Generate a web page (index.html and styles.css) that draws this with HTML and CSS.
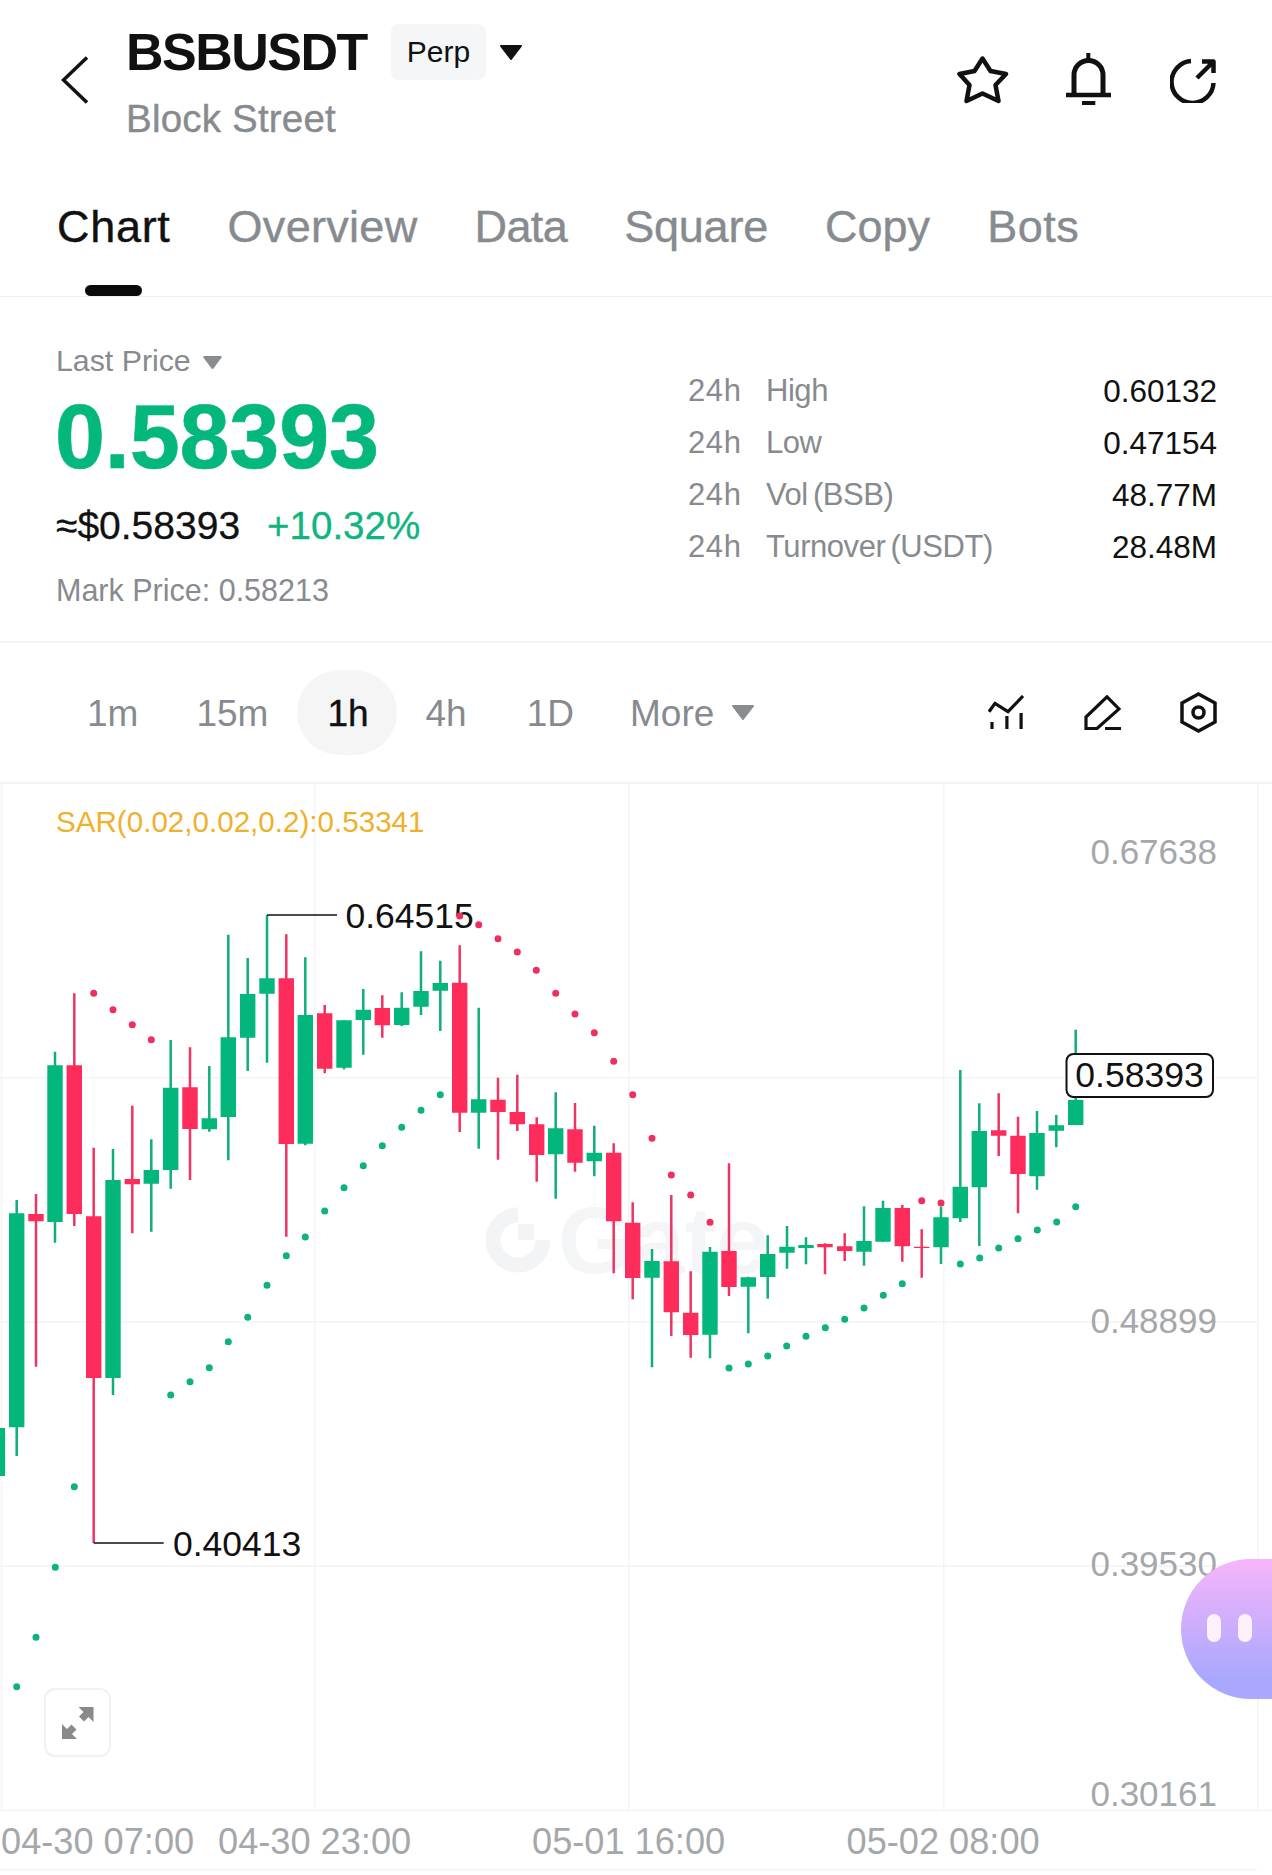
FILE: index.html
```html
<!DOCTYPE html>
<html lang="en">
<head>
<meta charset="utf-8">
<title>BSBUSDT Perp</title>
<link rel="stylesheet" href="styles.css">
</head>
<body>
<main class="app">
  <header class="top">
    <svg class="back" viewBox="0 0 28 48"><path d="M26 1.5 2.5 24 26 46.5"/></svg>
    <div class="pair">
      <div class="pair-row">
        <h1 class="symbol">BSBUSDT</h1>
        <span class="badge">Perp</span>
        <svg class="caret caret-dark" viewBox="0 0 22 15"><path d="M1 1h20L11 14z"/></svg>
      </div>
      <div class="pair-name">Block Street</div>
    </div>
    <div class="top-icons">
      <svg class="ic-star" viewBox="0 0 52 50"><path d="M25.500 3.500 33.500 16 49 19 38.500 30 41.500 46 25.500 38.500 9.500 46 12.500 30 2.500 19 17.500 16z"/></svg>
      <svg class="ic-bell" viewBox="0 0 45 52"><path d="M8 41V22a14.500 14.500 0 0 1 29 0V41"/><path class="solid" d="M20.300 0h4v7h-4zM0 39.700h45v4.600H0zM16 48h13.300v4.300H16z"/></svg>
      <svg class="ic-share" viewBox="0 0 46 45"><path d="M21 3A21 21 0 1 0 43.500 25"/><path d="M27 20 43 4M32 3.500H43.500V15"/></svg>
    </div>
  </header>

  <nav class="tabs">
    <a class="tab tab-on">Chart</a>
    <a class="tab">Overview</a>
    <a class="tab">Data</a>
    <a class="tab">Square</a>
    <a class="tab">Copy</a>
    <a class="tab">Bots</a>
  </nav>

  <section class="ticker">
    <div class="quote">
      <div class="quote-label">Last Price <svg class="caret caret-grey" viewBox="0 0 20 14"><path d="M1 1h18L10 13z"/></svg></div>
      <div class="quote-price">0.58393</div>
      <div class="quote-sub"><span>≈$0.58393</span><span class="up">+10.32%</span></div>
      <div class="quote-mark">Mark Price: 0.58213</div>
    </div>
    <dl class="stats">
      <dt>24h</dt><dd class="stat-name">High</dd><dd class="stat-val">0.60132</dd>
      <dt>24h</dt><dd class="stat-name">Low</dd><dd class="stat-val">0.47154</dd>
      <dt>24h</dt><dd class="stat-name">Vol (BSB)</dd><dd class="stat-val">48.77M</dd>
      <dt>24h</dt><dd class="stat-name">Turnover (USDT)</dd><dd class="stat-val">28.48M</dd>
    </dl>
  </section>

  <div class="frames">
    <a class="frame">1m</a>
    <a class="frame">15m</a>
    <a class="frame frame-on">1h</a>
    <a class="frame">4h</a>
    <a class="frame">1D</a>
    <a class="frame">More</a>
    <svg class="caret caret-grey caret-more" viewBox="0 0 22 15"><path d="M1 1h20L11 14z"/></svg>
    <div class="tools">
      <svg class="tool" viewBox="0 0 37 35"><path d="M1 16.700 7 8.300 20 16.700 35 1M4 27v7M18.900 21v13M33.100 18v16"/></svg>
      <svg class="tool" viewBox="0 0 37 35"><path d="M23 1.800 35 14 13 33.500H2V22zM21 33.500H37"/></svg>
      <svg class="tool tool-hex" viewBox="0 0 37 41"><path d="M18.500 2 35 11V30L18.500 39 2 30V11z"/><circle cx="18.500" cy="20.500" r="5.500"/></svg>
    </div>
  </div>

  <div class="chart">
    <svg class="plot" viewBox="0 784 1272 1091" role="img" aria-label="BSBUSDT 1h candlestick chart">
      <path class="grid" d="M1.500 784V1810M314.700 784V1810M628.700 784V1810M943.700 784V1810M1257.700 784V1810M0 1077.700H1257M0 1322H1257M0 1566H1257M0 1810.500H1272M0 1869.500H1257"/>

      <g class="mark">
        <path class="mark-ring" d="M518 1215A25 25 0 1 0 543 1240"/>
        <path class="mark-fill" d="M518 1224h16v16h-16z"/>
        <text class="mark-text" x="558" y="1273">Gate</text>
      </g>

      <path class="wick wick-g" d="M16.700 1200V1456M55 1051.700V1242.700M113 1149V1395M151.300 1139.300V1231.700M170.700 1040V1188.700M209.300 1066V1131.700M228.300 934.700V1160.300M247.700 958V1071M267 915V1062.700M305.300 957.300V1145.300M344 1020.300V1069.300M363.300 989V1054.700M401.700 992.300V1026M421 951.300V1015M440.300 960.700V1031M478.700 1007.700V1148.700M555.700 1092.300V1198.700M594.300 1125.700V1176.300M652 1249V1367.300M710 1247V1358.300M748.300 1276.700V1333.300M767.700 1235.300V1298.700M787 1226V1268.700M806 1237.300V1264.300M864 1206.300V1265.700M883 1200.700V1242M941 1206.700V1264M960.300 1070V1222M979.300 1103.300V1246M1037 1111V1189.700M1056.300 1115V1147.300M1075.700 1029.700V1110"/>
      <path class="wick wick-r" d="M36 1194V1366.700M74.300 993.300V1226M93.700 1147.700V1543M132.300 1105.700V1233.300M190 1047.300V1180M286.300 934.300V1236.700M324.700 1005V1073.300M382.300 995.300V1037.700M459.700 945.300V1132M498 1077.700V1159.700M517.300 1074.700V1131M536.700 1117.300V1181.700M575 1103V1171.700M613.700 1143.300V1273.300M632.700 1202.300V1299.300M671.300 1195V1336M690.700 1271.300V1357.700M729 1163.300V1296M825 1243.300V1274.300M844.700 1233.300V1261M902.300 1205V1261.700M921.700 1229.300V1277.700M998.700 1093.300V1156M1018 1116.700V1213.300"/>
      <path class="body body-g" d="M-2.600 1428V1476M16.700 1213.300V1427.300M55 1065.300V1222M113 1180V1378M151.300 1170V1183.700M170.700 1087.700V1170M209.300 1118.300V1129.300M228.300 1037.300V1117M247.700 994V1037.700M267 978.300V993.700M305.300 1015V1143.700M344 1020.300V1067.700M363.300 1009.700V1020M401.700 1007.700V1025M421 991V1006.700M440.300 983V990.700M478.700 1099.300V1112.700M555.700 1128.300V1154.300M594.300 1152.700V1161.300M652 1261V1277.700M710 1251.700V1334.700M748.300 1277.300V1286.700M767.700 1254V1277M787 1246.700V1252.700M806 1245V1248M864 1241V1251.700M883 1208V1241.700M941 1217.300V1247.300M960.300 1186.700V1218.300M979.300 1131V1187.300M1037 1133V1176.300M1056.300 1125.300V1130.700M1075.700 1100V1125"/>
      <path class="body body-r" d="M36 1214V1221.300M74.300 1065.300V1214M93.700 1216.300V1378M132.300 1179V1184.300M190 1087.300V1129M286.300 978.300V1144M324.700 1013.300V1068.700M382.300 1008V1025.300M459.700 982.700V1112.700M498 1099.700V1112M517.300 1112V1124.300M536.700 1124.300V1155M575 1129.300V1162.700M613.700 1152.700V1221.300M632.700 1222.700V1278M671.300 1261.300V1312.300M690.700 1312.700V1335M729 1251V1287M825 1244V1247.300M844.700 1246.300V1251M902.300 1208V1246.300M921.700 1246.700V1248M998.700 1130.300V1135.700M1018 1135.700V1174"/>

      <path class="lead" d="M267 915H337M93.700 1543H163.700"/>
      <text class="peak" x="345.500" y="928">0.64515</text>
      <text class="peak" x="173" y="1555.500">0.40413</text>

      <path class="dots dots-g" d="M16.700 1686.700h.01M36 1637.300h.01M55.300 1567.300h.01M74.300 1486.700h.01M170.700 1395h.01M190 1381.700h.01M209.300 1367.700h.01M228.300 1341.700h.01M247.700 1317.300h.01M267 1285.300h.01M286.300 1255.700h.01M305.300 1237h.01M324.700 1211h.01M344 1187.700h.01M363.300 1165.700h.01M382.300 1145.700h.01M401.700 1127.300h.01M421 1110.300h.01M440.300 1094.700h.01M729 1368h.01M748.300 1364h.01M767.700 1356h.01M786.700 1346h.01M806 1336.300h.01M825.300 1327.700h.01M844.700 1319.300h.01M864 1308h.01M883.300 1295.300h.01M902.300 1283.700h.01M960.300 1264h.01M979.700 1258h.01M998.700 1248h.01M1018 1238.700h.01M1037.300 1230h.01M1056.700 1222h.01M1075.700 1206.700h.01"/>
      <path class="dots dots-r" d="M93.700 993.300h.01M113 1009.700h.01M132.300 1024.700h.01M151.300 1039.700h.01M459.700 916h.01M478.700 924.700h.01M498 938.700h.01M517.300 952h.01M536.300 970.300h.01M555.700 993.300h.01M575 1014h.01M594.300 1032.700h.01M613.700 1061.300h.01M632.700 1094.700h.01M652 1138.300h.01M671.300 1175h.01M690.700 1195h.01M710 1222.300h.01M921.700 1200.700h.01M941 1203h.01"/>

      <text class="sar" x="56" y="831.500">SAR(0.02,0.02,0.2):0.53341</text>

      <text class="axis axis-y" x="1217" y="864">0.67638</text>
      <text class="axis axis-y" x="1217" y="1332.500">0.48899</text>
      <text class="axis axis-y" x="1217" y="1575.500">0.39530</text>
      <text class="axis axis-y" x="1217" y="1805.500">0.30161</text>

      <rect class="last-box" x="1066.500" y="1054" width="146.500" height="43" rx="7"/>
      <text class="last-text" x="1139.500" y="1087">0.58393</text>

      <text class="axis" x="1" y="1854">04-30 07:00</text>
      <text class="axis" x="218" y="1854">04-30 23:00</text>
      <text class="axis" x="532" y="1854">05-01 16:00</text>
      <text class="axis" x="846.500" y="1854">05-02 08:00</text>
    </svg>

    <button class="expand" aria-label="Full screen">
      <svg viewBox="0 0 32 32"><path d="M31.500 0v15l-5-5-4.500 4.500L17 9.500 21.500 5l-5-5zM0 32V17l5 5 4.500-4.500 5 5L10 27l5 5z"/></svg>
    </button>

    <div class="assistant"><i></i><i></i></div>
  </div>
</main>
</body>
</html>
```
FILE: styles.css
```css
* { box-sizing: border-box; }
html, body { margin: 0; background: #fff; }
body { font-family: "Liberation Sans", Arial, sans-serif; color: #111; }
.app { width: 1272px; height: 1875px; overflow: hidden; }

/* header */
.top { display: flex; height: 165px; padding-left: 61px; padding-right: 56px; }
.back { width: 28px; height: 48px; margin-top: 56px; flex: none; fill: none; stroke: #111; stroke-width: 3.5; }
.pair { margin-left: 37px; padding-top: 22px; }
.pair-row { display: flex; align-items: center; }
.symbol { margin: 0; font-size: 52px; line-height: 60px; font-weight: 700; letter-spacing: -1.5px; }
.badge { margin-left: 24px; height: 56px; padding: 0 16px; line-height: 56px; font-size: 30px; background: #f5f6f7; border-radius: 8px; }
.caret { display: block; flex: none; }
.caret path { stroke-linejoin: round; stroke-width: 2; }
.caret-dark { width: 22px; height: 15px; margin-left: 14px; fill: #111; }
.caret-dark path { stroke: #111; }
.caret-grey { fill: #8a8d90; }
.caret-grey path { stroke: #8a8d90; }
.pair-name { margin-top: 15px; font-size: 38.500px; line-height: 44px; letter-spacing: .2px; color: #878b8f; -webkit-text-stroke: .4px #878b8f; }
.top-icons { display: flex; margin-left: auto; padding-top: 53px; }
.top-icons svg { display: block; fill: none; stroke: #111; stroke-width: 5; stroke-linejoin: round; }
.top-icons .solid { fill: #111; stroke: none; }
.top-icons .ic-star { width: 52px; height: 50px; margin-top: 2px; stroke-width: 4.500px; }
.ic-bell { width: 45px; height: 52px; margin-left: 57px; }
.top-icons .ic-share { width: 46px; height: 45px; margin-left: 59px; margin-top: 5px; stroke-width: 4.500px; }

/* tabs */
.tabs { display: flex; gap: 57px; height: 132px; padding: 36px 0 0 57px; border-bottom: 1px solid #f0f0f0; }
.tab { position: relative; height: 95px; font-size: 45px; line-height: 52px; letter-spacing: .3px; color: #878b8f; -webkit-text-stroke: .4px #878b8f; }
.tab:nth-child(3) { letter-spacing: -.6px; }
.tab:nth-child(4) { letter-spacing: -.2px; }
.tab:nth-child(5) { letter-spacing: 0; }
.tab:nth-child(6) { letter-spacing: .5px; }
.tab-on { color: #111; letter-spacing: .7px; -webkit-text-stroke-color: #111; }
.tab-on::after { content: ""; position: absolute; left: 28px; bottom: 0; width: 57px; height: 11px; background: #0a0a0a; border-radius: 6px; }

/* ticker */
.ticker { display: flex; justify-content: space-between; height: 346px; border-bottom: 2px solid #f5f5f5; }
.quote { padding: 46px 0 0 56px; }
.quote-label { display: flex; align-items: center; gap: 12px; font-size: 30.300px; line-height: 36px; color: #878b8f; }
.quote-label .caret { width: 19px; height: 13px; margin-top: 2px; }
.quote-price { margin-top: 8px; margin-left: -1px; font-size: 90px; line-height: 100px; font-weight: 700; letter-spacing: -.2px; color: #03b77d; -webkit-text-stroke: .6px #03b77d; }
.quote-sub { display: flex; gap: 27px; margin-top: 17px; font-size: 39px; line-height: 44px; -webkit-text-stroke: .3px #111; }
.up { font-size: 38.500px; color: #10b481; -webkit-text-stroke-color: #10b481; }
.quote-mark { margin-top: 24px; font-size: 30.500px; line-height: 36px; color: #878b8f; }
.stats { display: grid; grid-template-columns: 78px 1fr auto; grid-auto-rows: 52px; width: 529px; margin: 67.500px 55px 0 0; font-size: 31px; line-height: 52px; align-self: flex-start; }
.stats dt { color: #878b8f; letter-spacing: .6px; }
.stats dd { margin: 0; }
.stat-name { color: #878b8f; word-spacing: -3px; letter-spacing: -.45px; }
.stat-val { text-align: right; font-size: 31.500px; color: #111; }

/* time frames */
.frames { display: flex; align-items: center; height: 141px; padding: 0 55px 1px 58px; border-bottom: 2px solid #f3f3f3; }
.frame { height: 85px; padding: 0 29px; font-size: 37px; line-height: 88px; color: #878b8f; }
.frame:nth-child(3) { padding: 0 28px 0 30px; }
.frame:nth-child(5) { padding: 0 27px 0 31px; }
.frame-on { color: #111; background: #f5f5f5; border-radius: 43px; -webkit-text-stroke: .4px #111; }
.caret-more { width: 22px; height: 15px; margin-left: -11px; }
.tools { display: flex; align-items: center; gap: 59px; margin-left: auto; }
.tool { display: block; width: 37px; height: 35px; fill: none; stroke: #111; stroke-width: 3.200; }
.tool-hex { height: 41px; stroke-width: 3.500; }

/* chart */
.chart { position: relative; height: 1091px; }
.plot { display: block; width: 1272px; height: 1091px; font-family: "Liberation Sans", Arial, sans-serif; }
.grid { fill: none; stroke: #f3f4f5; stroke-width: 1.500; }
.mark-ring { fill: none; stroke: #f3f4f5; stroke-width: 15; }
.mark-fill { fill: #f3f4f5; }
.mark-text { font-size: 95px; font-weight: 700; fill: #f4f5f6; }
.wick { fill: none; stroke-width: 2.500; }
.wick-g { stroke: #0fae7c; }
.wick-r { stroke: #ee3462; }
.body { fill: none; stroke-width: 15.400; }
.body-g { stroke: #03b77c; }
.body-r { stroke: #fe2c5a; }
.dots { fill: none; stroke-width: 7; stroke-linecap: round; }
.dots-g { stroke: #0db27f; }
.dots-r { stroke: #ee2f5f; }
.lead { fill: none; stroke: #111; stroke-width: 1.500; }
.peak { font-size: 35.500px; fill: #111; }
.sar { font-size: 29.600px; fill: #eeb12b; }
.axis { font-size: 36.200px; fill: #a5a8ab; }
.axis-y { text-anchor: end; font-size: 35px; }
.last-box { fill: #fff; stroke: #111; stroke-width: 2; }
.last-text { font-size: 35.500px; fill: #111; text-anchor: middle; }

/* overlays */
.expand { position: absolute; left: 44px; top: 904px; display: flex; align-items: center; justify-content: center; width: 67px; height: 69px; padding: 0; background: #fff; border: 2px solid #f1f1f1; border-radius: 11px; }
.expand svg { display: block; width: 32px; height: 32px; fill: #8a8a8a; }
.assistant { position: absolute; right: 0; top: 775px; display: flex; gap: 17px; align-items: center; width: 91px; height: 140px; padding-left: 26px; background: linear-gradient(180deg, #f7b5fa 0%, #a9a8fe 85%); border-radius: 70px 0 0 70px; }
.assistant i { display: block; width: 14px; height: 28px; margin-top: -3px; background: #fdf1fb; border-radius: 7px; }
```
